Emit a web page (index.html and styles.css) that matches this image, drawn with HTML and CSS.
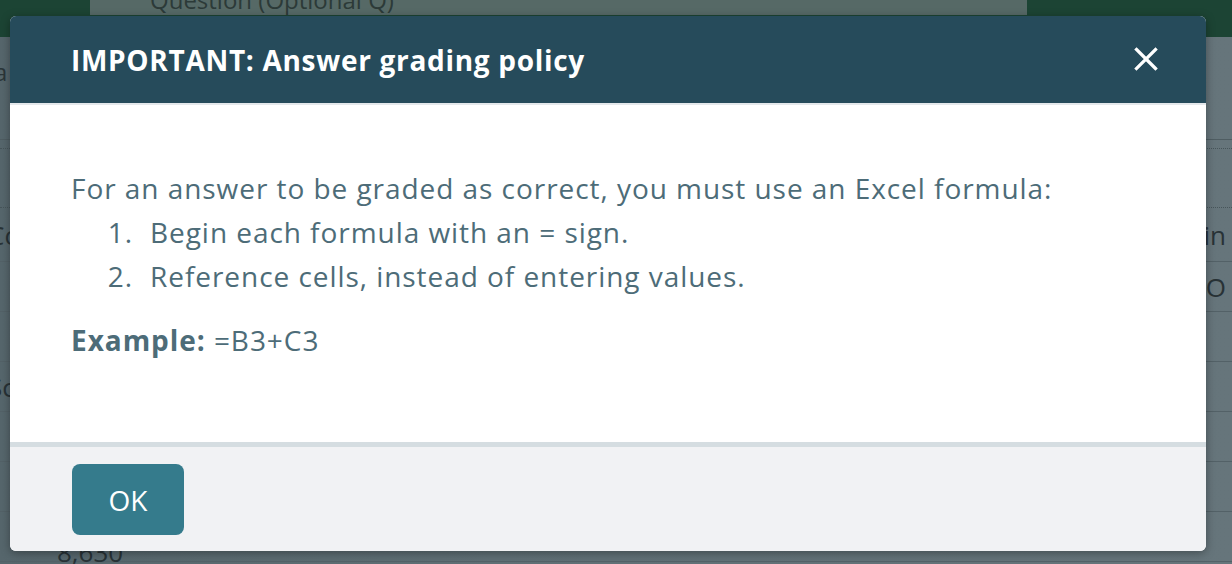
FILE: index.html
```html
<!DOCTYPE html>
<html lang="en">
<head>
    <meta charset="UTF-8">
    <meta name="viewport" content="width=device-width, initial-scale=1.0">
    <title>Answer grading policy</title>
    <link rel="stylesheet" href="styles.css">
</head>
<body>
    <div class="page">
        <div class="topbar">
            <div class="search">Question (Optional Q)</div>
        </div>
        <div class="toolbar">
            <span class="cell-a">a</span>
        </div>
        <div class="formula-row"></div>
        <div class="sheet">
            <div class="row head"><span>Co</span><span class="right">in</span></div>
            <div class="row"><span></span><span class="right">O</span></div>
            <div class="row"></div>
            <div class="row"><span>Sc</span></div>
            <div class="row"></div>
            <div class="row"></div>
            <div class="row"><span class="num">8,630</span></div>
        </div>
    </div>

    <div class="modal">
        <div class="modal-header">
            <h2>IMPORTANT: Answer grading policy</h2>
            <button class="close-btn" aria-label="Close">
                <svg width="24" height="24" viewBox="0 0 24 24">
                    <path d="M2.5 2.5 L21.5 21.5 M21.5 2.5 L2.5 21.5" stroke="#fff" stroke-width="3.2" stroke-linecap="square" fill="none"/>
                </svg>
            </button>
        </div>
        <div class="modal-body">
            <p>For an answer to be graded as correct, you must use an Excel formula:</p>
            <ol>
                <li>Begin each formula with an = sign.</li>
                <li>Reference cells, instead of entering values.</li>
            </ol>
            <p class="example"><b>Example:</b> =B3+C3</p>
        </div>
        <div class="modal-footer">
            <button class="ok-btn">OK</button>
        </div>
    </div>
</body>
</html>
```

FILE: styles.css
```css
html, body {
    margin: 0;
    height: 100%;
    overflow: hidden;
}
* {
    box-sizing: border-box;
}
body {
    font-family: "Open Sans", "Liberation Sans", sans-serif;
    background-color: #5e6d73;
}
.page {
    height: 100%;
    overflow: hidden;
    background: linear-gradient(to right, #56666c, #5f6f75 40%, #66757b);
}
.topbar {
    height: 37px;
    background-color: #1c4434;
    padding: 0 205px 0 90px;
}
.search {
    height: 15px;
    background-color: #566966;
    color: #2c3a38;
    font-size: 24px;
    line-height: 0;
    padding-left: 60px;
    overflow: hidden;
}
.toolbar {
    height: 85px;
    border-bottom: 1px solid #4f5d62;
}
.cell-a {
    display: block;
    margin: 18px 0 0 -6px;
    font-size: 24px;
    color: #2b3639;
}
.formula-row {
    height: 60px;
    border-bottom: 1px dotted #47555a;
    border-top: 1px dotted #47555a;
    margin-top: 8px;
}
.sheet .row {
    height: 50px;
    border-bottom: 1px solid #536167;
    display: flex;
    justify-content: space-between;
    align-items: center;
    font-size: 26px;
    color: #283236;
}
.sheet .row.head {
    height: 54px;
}
.sheet .row span {
    margin-left: -12px;
}
.sheet .row .right {
    margin-right: 6px;
}
.sheet .row .num {
    margin-left: 57px;
    margin-top: 30px;
}

/* modal */
.modal {
    position: absolute;
    left: 10px;
    top: 16px;
    width: 1196px;
    height: 535px;
    display: flex;
    flex-direction: column;
    border-radius: 6px;
    overflow: hidden;
    background-color: #fff;
    box-shadow: 0 2px 10px rgba(0,0,0,0.35);
}
.modal-header {
    height: 89px;
    flex-shrink: 0;
    background-color: #264b5b;
    border-bottom: 2px solid #e4e8eb;
    display: flex;
    align-items: center;
    justify-content: space-between;
    padding: 0 48px 0 61px;
}
.modal-header h2 {
    margin: 0;
    color: #fff;
    font-size: 28px;
    font-weight: 700;
    letter-spacing: 0.7px;
}
.close-btn {
    background: none;
    border: none;
    padding: 0 0 2px;
    cursor: pointer;
    display: flex;
}
.modal-body {
    flex: 1;
    padding: 61px 61px 0;
    color: #4d6c78;
    font-size: 28px;
    line-height: 44px;
    letter-spacing: 0.95px;
}
.modal-body p {
    margin: 0;
}
.modal-body ol {
    margin: 0;
    padding: 0;
    list-style: none;
    counter-reset: item;
}
.modal-body li {
    counter-increment: item;
}
.modal-body li::before {
    content: counter(item) ".";
    display: inline-block;
    width: 62px;
    margin-right: 17px;
    text-align: right;
}
.modal-body .example {
    margin-top: 20px;
}
.modal-footer {
    height: 109px;
    flex-shrink: 0;
    background-color: #f1f2f4;
    border-top: 5px solid #d5dde1;
    padding: 17px 62px 0;
}
.ok-btn {
    width: 112px;
    height: 71px;
    border: none;
    border-radius: 8px;
    background-color: #357b8c;
    color: #fff;
    font-family: inherit;
    font-size: 28px;
    cursor: pointer;
}
```
